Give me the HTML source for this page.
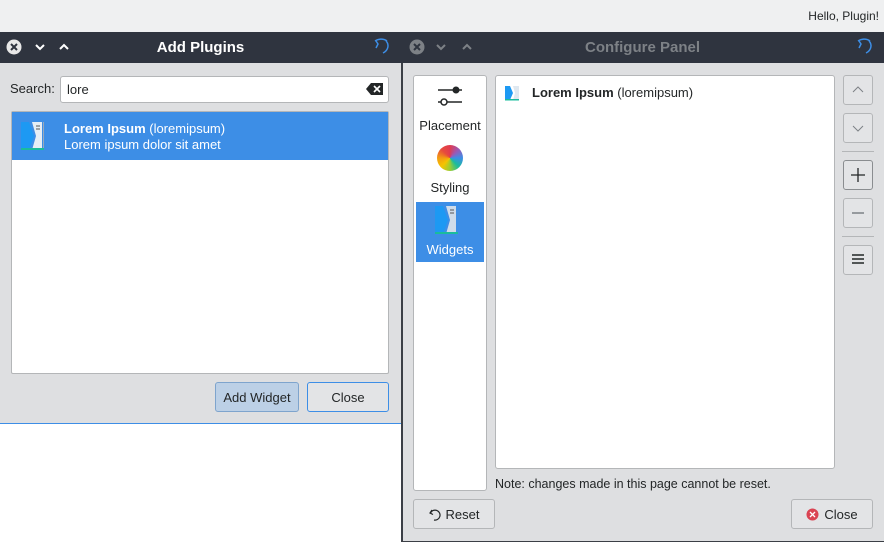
<!DOCTYPE html>
<html><head><style>
*{box-sizing:border-box;margin:0;padding:0}
body{width:884px;height:546px;background:#fff;font-family:"Liberation Sans",sans-serif;font-size:13px;color:#232627;position:relative;overflow:hidden}
.abs{position:absolute}
.top{left:0;top:0;width:884px;height:32px;background:#eff0f1}
.tb{background:#2f343f;height:31px;color:#fff;font-weight:bold;font-size:15px;text-align:center;line-height:32px}
.win{background:#dedfe1}
.btn{position:absolute;border:1px solid #b4b6b8;border-radius:3px;background:#e3e4e6;font-size:13px;display:flex;align-items:center;justify-content:center;gap:5px}
</style></head><body>
<div class="abs top"></div>
<div class="abs" style="right:5px;top:9px;font-size:12px">Hello, Plugin!</div>

<!-- Add Plugins -->
<div class="abs win" style="left:0;top:32px;width:402px;height:392px;border:1px solid #3d8ee6;border-top:none;border-left:none"></div>
<div class="abs tb" style="left:0;top:32px;width:401px">Add Plugins</div>
<svg class="abs" style="left:6px;top:39px" width="70" height="16"><circle cx="8" cy="8" r="7.5" fill="#e8e8e8"/><path d="M5 5l6 6M11 5l-6 6" stroke="#2f343f" stroke-width="2"/><path d="M30 6l4 4 4-4" stroke="#fff" stroke-width="2" fill="none"/><path d="M54 10l4-4 4 4" stroke="#fff" stroke-width="2" fill="none"/></svg>
<svg class="abs" style="left:372px;top:37px" width="20" height="20"><path d="M3 4c3-2 8-3 12 0M4 4l2 3-2 4M14 4c3 3 3 9-3 12" stroke="#3d8ee6" stroke-width="1.5" fill="none"/></svg>
<div class="abs" style="left:10px;top:81px">Search:</div>
<div class="abs" style="left:60px;top:76px;width:329px;height:27px;background:#fff;border:1px solid #b4b6b8;border-radius:3px;padding:5px 6px;font-size:13px">lore</div>
<svg class="abs" style="left:366px;top:82px" width="18" height="14"><path d="M5 1h12v12H5L0 7z" fill="#232627"/><path d="M8 4l6 6M14 4l-6 6" stroke="#fff" stroke-width="1.6"/></svg>
<div class="abs" style="left:11px;top:111px;width:378px;height:263px;background:#fff;border:1px solid #b4b6b8;border-radius:2px"></div>
<div class="abs" style="left:12px;top:112px;width:376px;height:48px;background:#3d8ee6;color:#fff">
<svg class="abs" style="left:7px;top:8px" width="34" height="32"><path d="M2 2h8l5 14-5 14H2z" fill="#1d99f3"/><path d="M13 2h10v28H13l4-14z" fill="#e6eef5"/><rect x="24" y="2" width="1" height="28" fill="#9ab"/><path d="M17 6h4M17 9h4" stroke="#555"/><rect x="2" y="28" width="23" height="2" fill="#1abc9c"/></svg>
<div class="abs" style="left:52px;top:9px"><b>Lorem Ipsum</b> (loremipsum)</div>
<div class="abs" style="left:52px;top:25px">Lorem ipsum dolor sit amet</div>
</div>
<div class="btn" style="left:215px;top:382px;width:84px;height:30px;background:#bcd0e6;border-color:#7ea4cd">Add Widget</div>
<div class="btn" style="left:307px;top:382px;width:82px;height:30px;border-color:#3d8ee6">Close</div>

<!-- Configure Panel -->
<div class="abs win" style="left:401px;top:32px;width:483px;height:510px;border-left:2px solid #3b3f46;border-bottom:1px solid #3b3f46"></div>
<div class="abs tb" style="left:401px;top:32px;width:483px;color:#7d8186">Configure Panel</div>
<svg class="abs" style="left:409px;top:39px" width="70" height="16"><circle cx="8" cy="8" r="7.5" fill="#7d8186"/><path d="M5 5l6 6M11 5l-6 6" stroke="#2f343f" stroke-width="2"/><path d="M28 6l4 4 4-4" stroke="#7d8186" stroke-width="2" fill="none"/><path d="M54 10l4-4 4 4" stroke="#7d8186" stroke-width="2" fill="none"/></svg>
<svg class="abs" style="left:855px;top:37px" width="20" height="20"><path d="M3 4c3-2 8-3 12 0M4 4l2 3-2 4M14 4c3 3 3 9-3 12" stroke="#3d8ee6" stroke-width="1.5" fill="none"/></svg>
<div class="abs" style="left:413px;top:75px;width:74px;height:416px;background:#fff;border:1px solid #b4b6b8;border-radius:3px"></div>
<svg class="abs" style="left:437px;top:84px" width="26" height="24"><path d="M1 6h24M1 18h24" stroke="#232627" stroke-width="1.5"/><circle cx="19" cy="6" r="3.5" fill="#232627"/><circle cx="7" cy="18" r="3" fill="#fff" stroke="#232627" stroke-width="1.5"/></svg>
<div class="abs" style="left:413px;top:118px;width:74px;text-align:center">Placement</div>
<div class="abs" style="left:437px;top:145px;width:26px;height:26px;border-radius:50%;background:conic-gradient(#e03b50,#9b59b6,#3d8ee6,#1abc9c,#9acd32,#f5c400,#f39c12,#e74c3c,#e03b50)"></div>
<div class="abs" style="left:413px;top:180px;width:74px;text-align:center">Styling</div>
<div class="abs" style="left:416px;top:202px;width:68px;height:60px;background:#3d8ee6"></div>
<svg class="abs" style="left:433px;top:205px" width="34" height="32"><path d="M2 1h8l5 14-5 14H2z" fill="#1d99f3"/><path d="M13 1h10v28H13l4-14z" fill="#cfdcea"/><path d="M17 5h4M17 8h4" stroke="#555"/><rect x="2" y="27" width="23" height="2" fill="#1abc9c"/></svg>
<div class="abs" style="left:413px;top:242px;width:74px;text-align:center;color:#fff">Widgets</div>
<div class="abs" style="left:495px;top:75px;width:340px;height:394px;background:#fff;border:1px solid #b4b6b8;border-radius:3px"></div>
<svg class="abs" style="left:504px;top:85px" width="16" height="16"><path d="M1 1h5l3 7-3 7H1z" fill="#1d99f3"/><path d="M9 1h6v14H9l2-7z" fill="#dfe8f0"/><rect x="1" y="14" width="14" height="1.5" fill="#1abc9c"/></svg>
<div class="abs" style="left:532px;top:85px"><b>Lorem Ipsum</b> (loremipsum)</div>
<div class="abs" style="left:495px;top:477px;font-size:12.5px">Note: changes made in this page cannot be reset.</div>
<div class="btn" style="left:843px;top:75px;width:30px;height:30px"><svg width="28" height="28"><path d="M9 16l5-5 5 5" stroke="#7d8186" fill="none"/></svg></div>
<div class="btn" style="left:843px;top:113px;width:30px;height:30px"><svg width="28" height="28"><path d="M9 12l5 5 5-5" stroke="#7d8186" fill="none"/></svg></div>
<div class="abs" style="left:842px;top:151px;width:32px;height:1px;background:#b4b6b8"></div>
<div class="btn" style="left:843px;top:160px;width:30px;height:30px;border-color:#8a8d90"><svg width="28" height="28"><path d="M14 7v14M7 14h14" stroke="#232627" stroke-width="1.3"/></svg></div>
<div class="btn" style="left:843px;top:198px;width:30px;height:30px"><svg width="28" height="28"><path d="M8 14h12" stroke="#7d8186" stroke-width="1.5"/></svg></div>
<div class="abs" style="left:842px;top:236px;width:32px;height:1px;background:#b4b6b8"></div>
<div class="btn" style="left:843px;top:245px;width:30px;height:30px"><svg width="28" height="28"><path d="M8 9h12M8 13h12M8 17h12" stroke="#232627" stroke-width="1.5"/></svg></div>
<div class="btn" style="left:413px;top:499px;width:82px;height:30px"><svg width="12" height="14"><path d="M3 3l-2 3 3 1.5M1.5 6A5 5 0 1 1 5 13" stroke="#232627" stroke-width="1.2" fill="none"/></svg>Reset</div>
<div class="btn" style="left:791px;top:499px;width:82px;height:30px"><svg width="13" height="13"><circle cx="6.5" cy="6.5" r="6" fill="#da4453"/><path d="M4 4l5 5M9 4l-5 5" stroke="#fff" stroke-width="1.3"/></svg>Close</div>
</body></html>
